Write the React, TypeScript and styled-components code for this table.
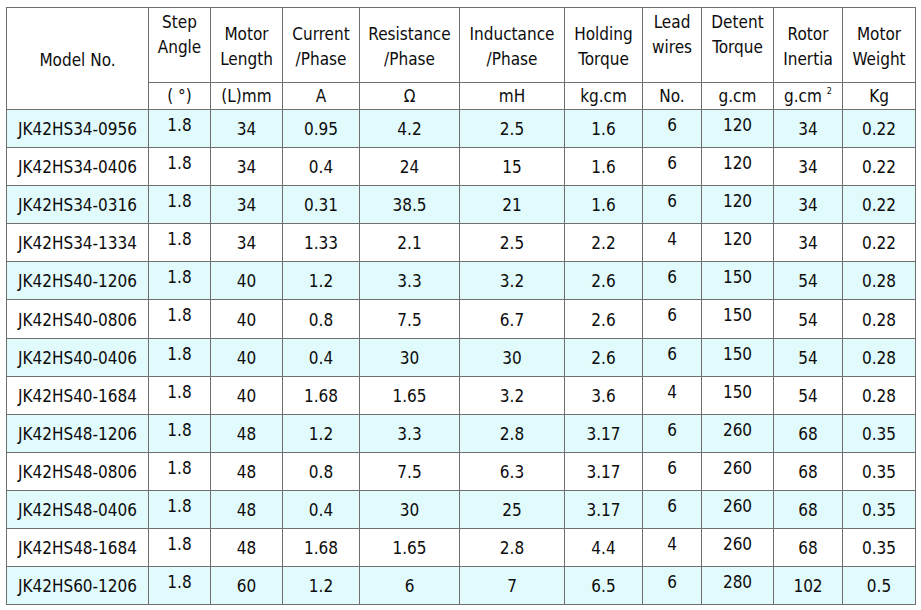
import type { ReactNode } from "react";
import styled, { createGlobalStyle } from "styled-components";

const GlobalStyle = createGlobalStyle`
  body {
    margin: 0;
    background: #ffffff;
    font-family: "DejaVu Sans Condensed", "DejaVu Sans", sans-serif;
    font-stretch: condensed;
  }
`;

const Page = styled.div`
  padding: 7px 0 0 6px;
`;

const Table = styled.table`
  border-collapse: collapse;
  table-layout: fixed;
  width: 910px;
  color: #0c0c0c;
  font-size: 17px;
`;

const HeadRow = styled.tr<{ $h: number }>`
  height: ${(p) => p.$h}px;
`;

const HeadCell = styled.th<{ $top?: boolean }>`
  padding: ${(p) => (p.$top ? "2px 0 0" : "3px 0 0")};
  vertical-align: ${(p) => (p.$top ? "top" : "middle")};
  border: 1px solid #6f6f6f;
  font-weight: normal;
  line-height: 25px;
  text-align: center;
  background: #ffffff;
`;

const UnitCell = styled.td`
  padding: 0;
  border: 1px solid #6f6f6f;
  text-align: center;
  line-height: 22px;
  background: #ffffff;
`;

const Sup = styled.sup`
  font-size: 9px;
  line-height: 0;
  vertical-align: 8px;
`;

const Row = styled.tr<{ $tint: boolean }>`
  height: 38.1px;
  background: ${(p) => (p.$tint ? "#e1fafc" : "#ffffff")};
`;

const Cell = styled.td<{ $top?: boolean }>`
  padding: ${(p) => (p.$top ? "3px 0 0" : "2px 0 0")};
  vertical-align: ${(p) => (p.$top ? "top" : "middle")};
  border: 1px solid #6f6f6f;
  text-align: center;
  line-height: 25px;
  white-space: nowrap;
`;

// ширины колонок сняты со скриншота
const widths = [142, 62, 72, 77, 100, 105, 78, 59, 72, 69, 73];

type Column = { head: string[]; unit: ReactNode; top?: boolean };

const columns: Column[] = [
  { head: ["Step", "Angle"], unit: "( °)", top: true },
  { head: ["Motor", "Length"], unit: "(L)mm" },
  { head: ["Current", "/Phase"], unit: "A" },
  { head: ["Resistance", "/Phase"], unit: "Ω" },
  { head: ["Inductance", "/Phase"], unit: "mH" },
  { head: ["Holding", "Torque"], unit: "kg.cm" },
  { head: ["Lead", "wires"], unit: "No.", top: true },
  { head: ["Detent", "Torque"], unit: "g.cm", top: true },
  {
    head: ["Rotor", "Inertia"],
    unit: (
      <>
        g.cm <Sup>2</Sup>
      </>
    ),
  },
  { head: ["Motor", "Weight"], unit: "Kg" },
];

const rows: string[][] = [
  ["JK42HS34-0956", "1.8", "34", "0.95", "4.2", "2.5", "1.6", "6", "120", "34", "0.22"],
  ["JK42HS34-0406", "1.8", "34", "0.4", "24", "15", "1.6", "6", "120", "34", "0.22"],
  ["JK42HS34-0316", "1.8", "34", "0.31", "38.5", "21", "1.6", "6", "120", "34", "0.22"],
  ["JK42HS34-1334", "1.8", "34", "1.33", "2.1", "2.5", "2.2", "4", "120", "34", "0.22"],
  ["JK42HS40-1206", "1.8", "40", "1.2", "3.3", "3.2", "2.6", "6", "150", "54", "0.28"],
  ["JK42HS40-0806", "1.8", "40", "0.8", "7.5", "6.7", "2.6", "6", "150", "54", "0.28"],
  ["JK42HS40-0406", "1.8", "40", "0.4", "30", "30", "2.6", "6", "150", "54", "0.28"],
  ["JK42HS40-1684", "1.8", "40", "1.68", "1.65", "3.2", "3.6", "4", "150", "54", "0.28"],
  ["JK42HS48-1206", "1.8", "48", "1.2", "3.3", "2.8", "3.17", "6", "260", "68", "0.35"],
  ["JK42HS48-0806", "1.8", "48", "0.8", "7.5", "6.3", "3.17", "6", "260", "68", "0.35"],
  ["JK42HS48-0406", "1.8", "48", "0.4", "30", "25", "3.17", "6", "260", "68", "0.35"],
  ["JK42HS48-1684", "1.8", "48", "1.68", "1.65", "2.8", "4.4", "4", "260", "68", "0.35"],
  ["JK42HS60-1206", "1.8", "60", "1.2", "6", "7", "6.5", "6", "280", "102", "0.5"],
];

export default function App() {
  return (
    <Page>
      <GlobalStyle />
      <Table>
        <colgroup>
          {widths.map((w, i) => (
            <col key={i} style={{ width: w }} />
          ))}
        </colgroup>
        <thead>
          <HeadRow $h={75}>
            <HeadCell rowSpan={2}>Model No.</HeadCell>
            {columns.map((c, i) => (
              <HeadCell key={i} $top={c.top}>
                {c.head[0]}
                <br />
                {c.head[1]}
              </HeadCell>
            ))}
          </HeadRow>
          <HeadRow $h={27}>
            {columns.map((c, i) => (
              <UnitCell key={i}>{c.unit}</UnitCell>
            ))}
          </HeadRow>
        </thead>
        <tbody>
          {rows.map((r, i) => (
            <Row key={r[0]} $tint={i % 2 === 0}>
              {r.map((v, j) => (
                <Cell key={j} $top={j > 0 && columns[j - 1].top}>
                  {v}
                </Cell>
              ))}
            </Row>
          ))}
        </tbody>
      </Table>
    </Page>
  );
}
